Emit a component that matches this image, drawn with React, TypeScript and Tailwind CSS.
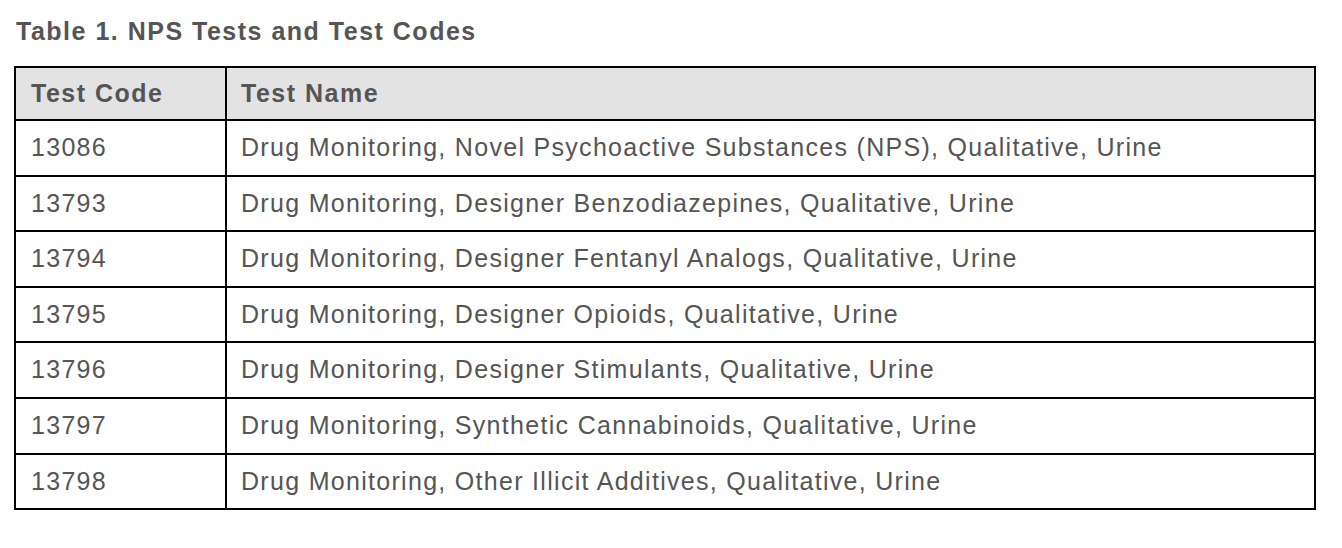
import React from "react";

const rows: [string, string][] = [
  ["13086", "Drug Monitoring, Novel Psychoactive Substances (NPS), Qualitative, Urine"],
  ["13793", "Drug Monitoring, Designer Benzodiazepines, Qualitative, Urine"],
  ["13794", "Drug Monitoring, Designer Fentanyl Analogs, Qualitative, Urine"],
  ["13795", "Drug Monitoring, Designer Opioids, Qualitative, Urine"],
  ["13796", "Drug Monitoring, Designer Stimulants, Qualitative, Urine"],
  ["13797", "Drug Monitoring, Synthetic Cannabinoids, Qualitative, Urine"],
  ["13798", "Drug Monitoring, Other Illicit Additives, Qualitative, Urine"],
];

export default function App() {
  return (
    <div
      className="w-[1342px] h-[548px] bg-white text-[#555555] pt-[16px] pl-[16px]"
      style={{ fontFamily: '"Liberation Sans", Arial, sans-serif' }}
    >
      <div className="text-[25px] leading-[30px] font-bold tracking-[1.5px]">Table 1. NPS Tests and Test Codes</div>
      <div className="mt-[20px] ml-[-2px] w-[1302px] border-2 border-black">
        <div className="flex h-[51px] bg-[#e3e3e3] items-center text-[25px] font-bold tracking-[1.5px]">
          <div className="w-[211px] h-full flex items-center pl-[15px] border-r-2 border-black">Test Code</div>
          <div className="flex-1 pl-[14px]">Test Name</div>
        </div>
        {rows.map(([code, name]) => (
          <div key={code} className="flex h-[55.6px] border-t-2 border-black items-center text-[25px] tracking-[1.3px]">
            <div className="w-[211px] h-full flex items-center pl-[15px] border-r-2 border-black">{code}</div>
            <div className="flex-1 pl-[14px]">{name}</div>
          </div>
        ))}
      </div>
    </div>
  );
}
